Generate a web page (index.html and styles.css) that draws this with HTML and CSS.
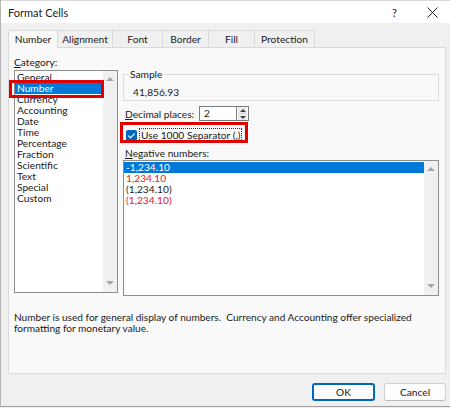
FILE: index.html
```html
<!DOCTYPE html>
<html>
<head>
<meta charset="utf-8">
<link rel="stylesheet" href="styles.css">
</head>
<body>
<div class="window">
  <div class="titlebar">
    <span class="title">Format Cells</span>
    <span class="help">?</span>
    <span class="close">
      <svg width="11" height="11" viewBox="0 0 11 11"><path d="M0.5 0.5 L10.5 10.5 M10.5 0.5 L0.5 10.5" stroke="#222" stroke-width="1"/></svg>
    </span>
  </div>
  <div class="body">
    <div class="tabs">
      <div class="tab active w-number">Number</div>
      <div class="tab w-align">Alignment</div>
      <div class="tab w-font">Font</div>
      <div class="tab w-border">Border</div>
      <div class="tab w-fill">Fill</div>
      <div class="tab w-prot">Protection</div>
    </div>
    <div class="panel">
      <div class="columns">
        <div class="leftcol">
          <div class="label"><u>C</u>ategory:</div>
          <div class="listbox catlist">
            <div class="items">
              <div class="item">General</div>
              <div class="item selected">Number</div>
              <div class="item">Currency</div>
              <div class="item">Accounting</div>
              <div class="item">Date</div>
              <div class="item">Time</div>
              <div class="item">Percentage</div>
              <div class="item">Fraction</div>
              <div class="item">Scientific</div>
              <div class="item">Text</div>
              <div class="item">Special</div>
              <div class="item">Custom</div>
            </div>
            <div class="scrollbar">
              <span class="arrow up"></span>
              <span class="arrow down"></span>
            </div>
            <div class="redbox catred"></div>
          </div>
        </div>
        <div class="rightcol">
          <div class="sample">
            <span class="legend">Sample</span>
            <div class="samplevalue">41,856.93</div>
          </div>
          <div class="decrow">
            <span class="declabel"><u>D</u>ecimal places:</span>
            <div class="spinbox">
              <div class="spinvalue">2</div>
              <div class="spinbtns">
                <div class="spinbtn"><span class="arrow sup"></span></div>
                <div class="spinbtn"><span class="arrow sdown"></span></div>
              </div>
            </div>
          </div>
          <div class="checkrow">
            <span class="checkbox">
              <svg width="11" height="11" viewBox="0 0 11 11"><path d="M2.4 5.7 L4.5 7.8 L8.7 3.4" fill="none" stroke="#fff" stroke-width="1.2"/></svg>
            </span>
            <span class="checklabel"><u>U</u>se 1000 Separator (,)</span>
            <div class="redbox checkred"></div>
          </div>
          <div class="label neglabel"><u>N</u>egative numbers:</div>
          <div class="listbox neglist">
            <div class="items">
              <div class="item selected">-1,234.10</div>
              <div class="item red">1,234.10</div>
              <div class="item">(1,234.10)</div>
              <div class="item red">(1,234.10)</div>
            </div>
            <div class="scrollbar">
              <span class="arrow up"></span>
              <span class="arrow down"></span>
            </div>
          </div>
        </div>
      </div>
      <div class="desc">
        <div class="descline">Number is used for general display of numbers.&nbsp; Currency and Accounting offer specialized</div>
        <div class="descline">formatting for monetary value.</div>
      </div>
    </div>
    <div class="buttons">
      <button class="btn ok">OK</button>
      <button class="btn cancel">Cancel</button>
    </div>
  </div>
</div>
</body>
</html>
```

FILE: styles.css
```css
html, body {
  margin: 0;
  padding: 0;
  background: #f0f0f0;
}
body {
  width: 450px;
  height: 408px;
  overflow: hidden;
  font-family: Lato, "Noto Sans", sans-serif;
  font-size: 10.2px;
  color: #1a1a1a;
}
.window {
  width: 450px;
  height: 407px;
  background: #f0f0f0;
  border-bottom: 1px solid #a0a0a0;
  border-left: 1px solid #b4b4b4;
  box-sizing: border-box;
  display: flex;
  flex-direction: column;
}
.titlebar {
  height: 23px;
  background: #fff;
  display: flex;
  align-items: center;
  padding-left: 7px;
  font-size: 11px;
  border-top: 1px solid #d8d8d8;
  box-sizing: border-box;
}
.title { flex: 1; }
.help { width: 6px; margin-right: 29px; font-size: 11px; }
.close { width: 11px; margin-right: 12px; display: flex; }
.body {
  flex: 1;
  display: flex;
  flex-direction: column;
  padding: 7px 4px 0 7px;
}
.tabs {
  display: flex;
  height: 17px;
  position: relative;
  z-index: 2;
}
.tab {
  box-sizing: border-box;
  height: 17px;
  border: 1px solid #dadada;
  border-bottom: none;
  border-left: none;
  text-align: center;
  line-height: 16px;
  background: #f0f0f0;
  white-space: nowrap;
}
.tab.active {
  background: #f9f9f9;
  border-left: 1px solid #dadada;
  height: 18px;
}
.w-number { width: 50px; }
.w-align { width: 55px; }
.w-font { width: 50px; }
.w-border { width: 46px; }
.w-fill { width: 46px; }
.w-prot { width: 60px; }
.panel {
  height: 327px;
  box-sizing: border-box;
  background: #f9f9f9;
  border: 1px solid #dadada;
  padding: 7px 6px 0 5px;
  display: flex;
  flex-direction: column;
}
.columns {
  display: flex;
  gap: 5px;
}
.leftcol {
  width: 104px;
  display: flex;
  flex-direction: column;
}
.rightcol {
  flex: 1;
  display: flex;
  flex-direction: column;
}
.label {
  height: 15px;
  line-height: 14px;
  white-space: nowrap;
}
.listbox {
  position: relative;
  background: #fff;
  border: 1px solid #8c8c8c;
  box-sizing: border-box;
  display: flex;
}
.catlist { height: 223px; }
.items { flex: 1; padding-top: 1px; }
.item {
  height: 11px;
  line-height: 11px;
  padding-left: 2px;
  white-space: nowrap;
}
.item.selected {
  background: #0078d7;
  color: #fff;
}
.catlist .item.selected {
  margin: 0 2px 0 0;
  height: 12px;
  line-height: 12px;
  margin-top: -1px;
  margin-bottom: 0;
}
.item.red { color: #e0202c; }
.scrollbar {
  width: 14px;
  background: #f0f0f0;
  display: flex;
  flex-direction: column;
  justify-content: space-between;
  align-items: center;
  padding: 6px 0 7px;
}
.arrow {
  width: 0;
  height: 0;
  border-left: 4px solid transparent;
  border-right: 4px solid transparent;
}
.arrow.up { border-bottom: 4px solid #a6a6a6; }
.arrow.down { border-top: 4px solid #a6a6a6; }
.redbox {
  position: absolute;
  border: 3px solid #e00000;
  box-sizing: border-box;
  pointer-events: none;
}
.catred {
  left: -6px;
  top: 9px;
  width: 95px;
  height: 18px;
}
.sample {
  margin-top: 19px;
  height: 27px;
  box-sizing: border-box;
  border: 1px solid #dcdcdc;
  position: relative;
}
.legend {
  position: absolute;
  top: -8px;
  left: 4px;
  padding: 0 2px;
  background: #f9f9f9;
  line-height: 14px;
}
.samplevalue {
  padding: 10px 0 0 9px;
  line-height: 14px;
}
.decrow {
  margin-top: 5px;
  display: flex;
  align-items: center;
  height: 15px;
}
.declabel {
  width: 74px;
  padding-left: 2px;
  white-space: nowrap;
}
.spinbox {
  display: flex;
  height: 15px;
  box-sizing: border-box;
}
.spinvalue {
  width: 37px;
  box-sizing: border-box;
  border: 1px solid #7a7a7a;
  border-right: none;
  background: #fff;
  line-height: 13px;
  padding-left: 4px;
}
.spinbtns {
  width: 13px;
  box-sizing: border-box;
  border: 1px solid #7a7a7a;
  display: flex;
  flex-direction: column;
  background: #fff;
}
.spinbtn {
  flex: 1;
  display: flex;
  align-items: center;
  justify-content: center;
  background: #ececec;
  margin: 0 1px;
}
.spinbtn + .spinbtn { border-top: 1px solid #d0d0d0; }
.arrow.sup { border-left-width: 3px; border-right-width: 3px; border-bottom: 3px solid #404040; }
.arrow.sdown { border-left-width: 3px; border-right-width: 3px; border-top: 3px solid #404040; }
.checkrow {
  position: relative;
  margin-top: 6px;
  height: 16px;
  display: flex;
  align-items: center;
  padding-left: 3px;
}
.checkbox {
  width: 11px;
  height: 11px;
  background: #0067c0;
  border-radius: 2px;
  display: flex;
  margin-right: 2px;
}
.checklabel {
  border: 1px dotted #333;
  line-height: 12px;
  padding: 0 1px;
  white-space: nowrap;
}
.checkred {
  left: -3px;
  top: -5px;
  width: 128px;
  height: 21px;
}
.neglabel {
  margin-top: 3px;
  padding-left: 2px;
  height: 14px;
  line-height: 14px;
}
.neglist {
  height: 136px;
}
.neglist .items { padding-top: 1px; }
.desc {
  margin-top: 16px;
  line-height: 11px;
  font-size: 10.1px;
}
.descline { white-space: nowrap; }
.buttons {
  display: flex;
  justify-content: flex-end;
  gap: 9px;
  padding-top: 9px;
}
.btn {
  font-family: inherit;
  font-size: 10.2px;
  height: 18px;
  box-sizing: border-box;
  background: #fdfdfd;
  border: 1px solid #d0d0d0;
  border-bottom-color: #b8b8b8;
  border-radius: 3px;
  padding: 0;
  color: #1a1a1a;
  line-height: 14px;
}
.ok {
  width: 63px;
  border: 2px solid #0067c0;
}
.cancel { width: 62px; }
```
